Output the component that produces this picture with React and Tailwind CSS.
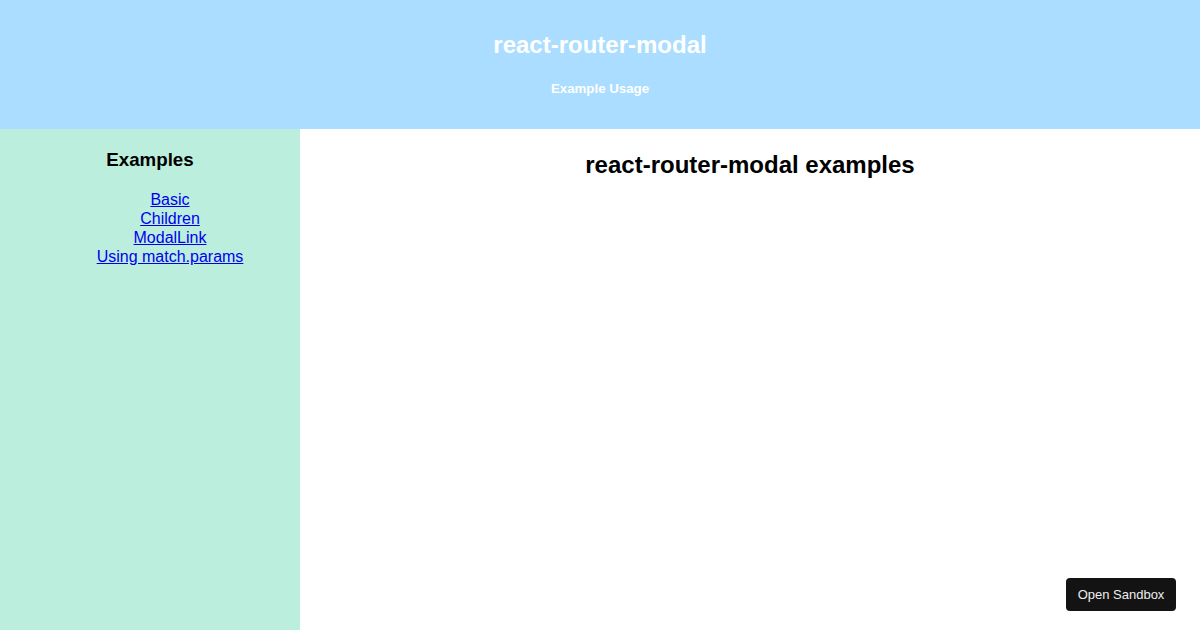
import React from 'react';

const links = ['Basic', 'Children', 'ModalLink', 'Using match.params'];

const App = () => (
  <div className="relative h-[630px] flex flex-col bg-white font-['Liberation_Sans',Arial,sans-serif] text-black">
    <header className="h-[129px] shrink-0 bg-[#aaddff] text-white text-center pt-[31px]">
      <h1 className="text-[24px] leading-[28px] font-bold">react-router-modal</h1>
      <h5 className="mt-[22px] text-[13.28px] leading-[16px] font-bold">Example Usage</h5>
    </header>

    <div className="flex flex-1 min-h-0">
      <aside className="w-[300px] shrink-0 bg-[#bbeedd] text-center pt-[20px]">
        <h3 className="text-[18.72px] leading-[22px] font-bold">Examples</h3>
        <ul className="mt-[19px] pl-[40px] text-[16px] leading-[19px]">
          {links.map((l) => (
            <li key={l}>
              <a href="#" className="text-[#0000ee] underline">
                {l}
              </a>
            </li>
          ))}
        </ul>
      </aside>

      <main className="flex-1 text-center pt-[22px]">
        <h2 className="text-[24px] leading-[28px] font-bold">react-router-modal examples</h2>
      </main>
    </div>

    <button className="absolute right-[24px] bottom-[19px] w-[110px] h-[33px] rounded-[4px] bg-[#131313] text-[#eeeeee] text-[13px] font-['Liberation_Sans',Arial,sans-serif]">
      Open Sandbox
    </button>
  </div>
);

export default App;
